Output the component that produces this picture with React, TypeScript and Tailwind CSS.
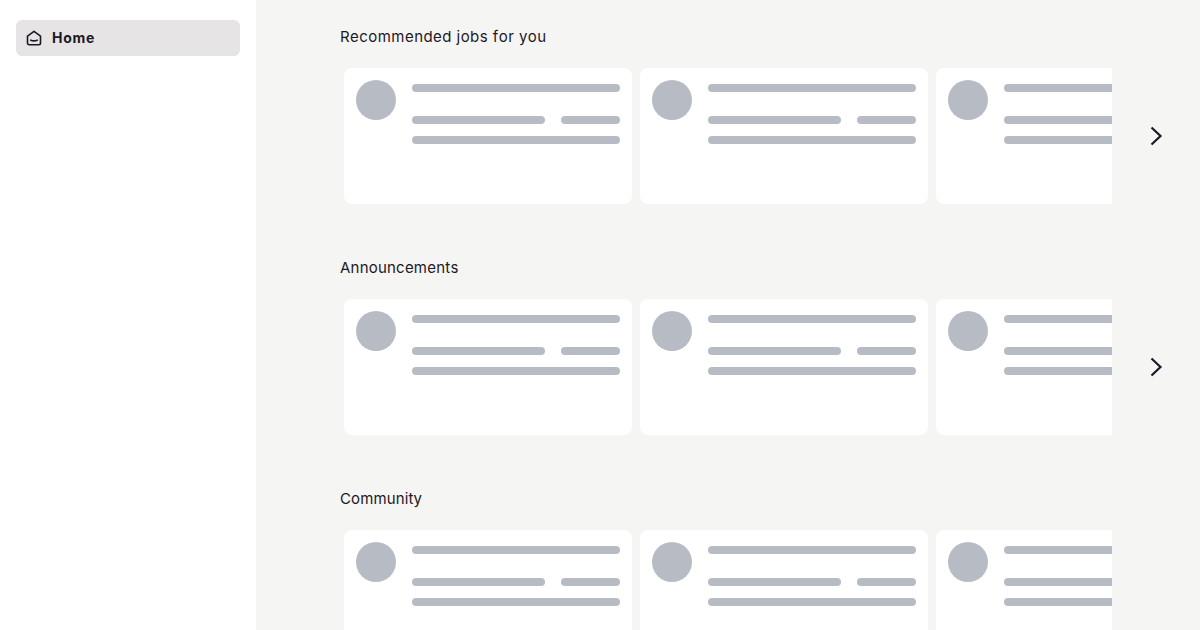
// tracking differs per title to match the widths in the design
const sections = [
  { title: "Recommended jobs for you", tracking: "tracking-[0.45px]" },
  { title: "Announcements", tracking: "tracking-[0.22px]" },
  { title: "Community", tracking: "tracking-[0.12px]" },
]

const SkeletonCard = () => {
  return (
    <div className="flex h-[136px] w-[288px] shrink-0 gap-4 rounded-lg bg-white p-3">
      <div className="h-10 w-10 shrink-0 rounded-full bg-[#b7bbc4]" />
      <div className="flex flex-1 flex-col pt-1">
        <div className="h-2 rounded-full bg-[#b7bbc4]" />
        <div className="mt-6 flex gap-4">
          <div className="h-2 flex-1 rounded-full bg-[#b7bbc4]" />
          <div className="h-2 w-[59px] rounded-full bg-[#b7bbc4]" />
        </div>
        <div className="mt-3 h-2 rounded-full bg-[#b7bbc4]" />
      </div>
    </div>
  )
}

const App = () => {
  return (
    <div
      className="flex h-[630px] w-[1200px] overflow-hidden bg-[#f5f5f4] text-[#1d1825]"
      style={{ fontFamily: "Inter, sans-serif" }}
    >
      <aside className="w-[256px] shrink-0 bg-white px-4 pt-5">
        <div className="flex h-9 items-center gap-2 rounded-md bg-[#e6e4e5] pl-2">
          <svg width="20" height="20" viewBox="0 0 20 20" fill="none" stroke="currentColor" strokeWidth="1.6" strokeLinejoin="round" strokeLinecap="round">
            <path d="M3.500 8.200 10 3.400l6.500 4.800V15a1.700 1.700 0 0 1-1.700 1.700H5.200A1.700 1.700 0 0 1 3.500 15Z" />
            <path d="M6.800 12.200q3.200 1.400 6.400 0" />
          </svg>
          <span className="text-sm font-bold tracking-[0.7px] [font-kerning:none]">Home</span>
        </div>
      </aside>

      <main className="flex-1 pl-[84px] pt-6">
        {sections.map((section, i) => (
          <section key={section.title} className="mb-[51px]">
            <h2 className={`h-6 pt-px text-[15px] leading-6 [font-kerning:none] ${section.tracking}`}>{section.title}</h2>
            <div className="mt-5 flex items-center">
              <div className="flex w-[772px] gap-2 overflow-hidden px-1">
                <SkeletonCard />
                <SkeletonCard />
                <SkeletonCard />
              </div>
              {i < 2 && (
                <div className="flex w-[88px] justify-center">
                  <svg width="24" height="24" viewBox="0 0 24 24" fill="none" stroke="currentColor" strokeWidth="2.2">
                    <path d="M7.500 3.500 16.500 12l-9 8.500" />
                  </svg>
                </div>
              )}
            </div>
          </section>
        ))}
      </main>
    </div>
  )
}

export default App
